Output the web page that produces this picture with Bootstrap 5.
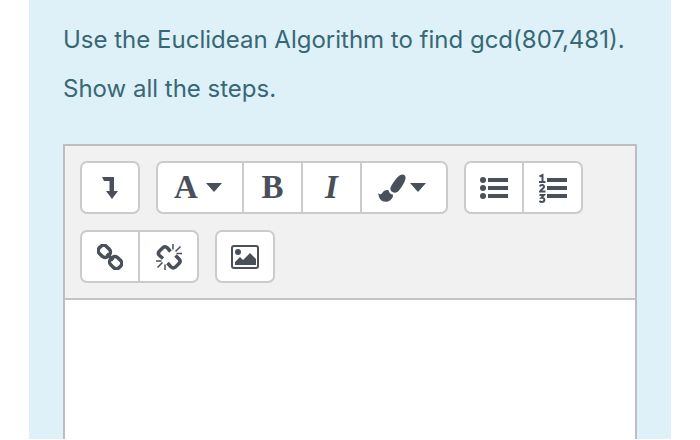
<!DOCTYPE html>
<html lang="en">
<head>
<meta charset="utf-8">
<meta name="viewport" content="width=device-width, initial-scale=1">
<title>Question</title>
<link href="https://cdn.jsdelivr.net/npm/bootstrap@5.3.0/dist/css/bootstrap.min.css" rel="stylesheet">
<style>
  body { font-family: Inter, "Liberation Sans", sans-serif; background: #fff; }
  .question { background: #def1f8; color: #386775; margin: 0 29px 1px; padding: 20px 34px 0; }
  .prompt { font-size: 24px; line-height: 40px; }
  .prompt p { margin-bottom: 9px; }
  .editor { border: 2px solid #bcbec0; border-bottom: 0; margin-top: 35px; }
  .toolbar { background: #f1f1f1; border-bottom: 2px solid #c4c4c4; padding: 15px; gap: 16px; }
  .tool { --bs-btn-color: #495059; --bs-btn-bg: #fff; --bs-btn-border-color: #cbcbcb; --bs-btn-border-width: 2px;
    --bs-btn-hover-color: #495059; --bs-btn-hover-bg: #f1f1f1; --bs-btn-hover-border-color: #cbcbcb;
    --bs-btn-padding-x: 0; --bs-btn-padding-y: 0; --bs-btn-border-radius: 7px;
    width: 60px; height: 53px; }
  .toolbar .btn-group > .tool { flex: none; }
  .toolbar .btn-group > .btn.tool + .btn.tool { margin-left: -2px; width: 61px; }
  .toolbar .btn-group > .btn.tool.tool-menu.tool-menu { width: 88px; padding-right: 4px; }
  .glyph { font: bold 33px/33px "Liberation Serif", serif; }
  .answer { resize: none; min-height: 60px; outline: 0; }
</style>
<script src="https://cdn.jsdelivr.net/npm/bootstrap@5.3.0/dist/js/bootstrap.bundle.min.js"></script>
</head>
<body class="vh-100 d-flex flex-column overflow-hidden">
<main class="question flex-grow-1 d-flex flex-column">
  <div class="prompt">
    <p>Use the Euclidean Algorithm to find gcd(807,481).</p>
    <p class="mb-0">Show all the steps.</p>
  </div>
  <div class="editor flex-grow-1 d-flex flex-column">
    <div class="toolbar d-flex flex-wrap" role="toolbar" aria-label="Editor">
      <div class="btn-group">
        <button type="button" class="btn tool d-flex align-items-center justify-content-center" aria-label="Show more buttons">
          <svg width="18" height="24" viewBox="0 0 18 24" fill="currentColor"><path d="M1 1h12v14h4l-6 8-6-8h3.500V5H3z"/></svg>
        </button>
      </div>
      <div class="btn-group">
        <button type="button" class="btn tool tool-menu d-flex align-items-center justify-content-center gap-2" aria-label="Paragraph styles">
          <span class="glyph">A</span>
          <svg width="16" height="9" viewBox="0 0 16 9" fill="currentColor"><path d="M0 0h16L8 9z"/></svg>
        </button>
        <button type="button" class="btn tool d-flex align-items-center justify-content-center" aria-label="Bold"><span class="glyph">B</span></button>
        <button type="button" class="btn tool d-flex align-items-center justify-content-center" aria-label="Italic"><span class="glyph fst-italic">I</span></button>
        <button type="button" class="btn tool tool-menu d-flex align-items-center justify-content-center gap-1" aria-label="Font colour">
          <svg width="28" height="28" viewBox="0 0 28 28" fill="currentColor"><path d="M21.500 1.500C24.500-.5 28 .5 27.500 4.500c-.5 3-3.500 8.500-6.500 12-2 2.300-4.500 2.800-6.500 1.500-2-1.200-2.800-3.200-1.500-5.500C15 9 18.500 3.500 21.500 1.500zM10.500 16.200c.5 2.500 2 4.200 4.700 4.500-.3 4.300-3.700 7-7.500 7-4.500 0-7-3.500-7.500-8.500 1.500 1.500 3 1.300 4-.3 1.300-2 3.700-3.200 6.300-2.700z"/></svg>
          <svg width="16" height="9" viewBox="0 0 16 9" fill="currentColor"><path d="M0 0h16L8 9z"/></svg>
        </button>
      </div>
      <div class="btn-group">
        <button type="button" class="btn tool d-flex align-items-center justify-content-center" aria-label="Unordered list">
          <svg width="28" height="24" viewBox="0 0 28 24" fill="currentColor"><circle cx="3" cy="4" r="3"/><circle cx="3" cy="12" r="3"/><circle cx="3" cy="20" r="3"/><path d="M8 2h20v4H8zM8 10h20v4H8zM8 18h20v4H8z"/></svg>
        </button>
        <button type="button" class="btn tool d-flex align-items-center justify-content-center" aria-label="Ordered list">
          <svg width="28" height="30" viewBox="0 0 28 30" fill="none" stroke="currentColor" stroke-width="2"><path d="M.5 3.500L3.500 2v7M0 9h6.500M.8 13.500c.8-2.200 4.700-1.700 4.200.5-.3 1.500-2.500 2.500-4 4.500h5.500M.5 22H5l-2.500 2.800C6.500 24.500 6 29 2.800 29 1.500 29 .8 28.500.3 28"/><path stroke-width="4" d="M8 7h20M8 15h20M8 23h20"/></svg>
        </button>
      </div>
      <div class="btn-group">
        <button type="button" class="btn tool d-flex align-items-center justify-content-center" aria-label="Link">
          <svg width="26" height="26" viewBox="0 0 26 26" fill="none" stroke="currentColor" stroke-width="3.500"><g transform="rotate(45 13 13)"><rect x="-1" y="8" width="12" height="10" rx="4"/><rect x="15" y="8" width="12" height="10" rx="4"/><path d="M8.500 13h9"/></g></svg>
        </button>
        <button type="button" class="btn tool d-flex align-items-center justify-content-center" aria-label="Unlink">
          <svg width="26" height="26" viewBox="0 0 26 26" fill="none" stroke="currentColor"><path stroke-width="3.500" d="M14.500 7.500L11.500 4C10 2.500 8.500 2.500 7 3.500L3.500 7C2 8.500 2 10 3.500 11.500l3.500 3M19.500 11.500l3.500 3.500c1.500 1.500 1.500 3 0 4.500l-3.500 3.500c-1.500 1.200-3 1.200-4.500 0l-3.500-4"/><path stroke-width="1.500" d="M17 0v5.500M24.500 2.500l-5 5M26 9.500h-5.500M0 17h5.500M1.500 23.500l5-5M9 26v-5.500"/></svg>
        </button>
      </div>
      <div class="btn-group">
        <button type="button" class="btn tool d-flex align-items-center justify-content-center" aria-label="Image">
          <svg width="28" height="24" viewBox="0 0 28 24" fill="currentColor"><rect x="1" y="1" width="26" height="22" rx="2" fill="none" stroke="currentColor" stroke-width="2"/><circle cx="7" cy="7" r="3"/><path d="M4 20v-3l5-5 3 3 7-7 6 6v6z"/></svg>
        </button>
      </div>
    </div>
    <textarea class="answer flex-grow-1 w-100 border-0 bg-white p-3" aria-label="Answer text"></textarea>
  </div>
</main>
</body>
</html>
